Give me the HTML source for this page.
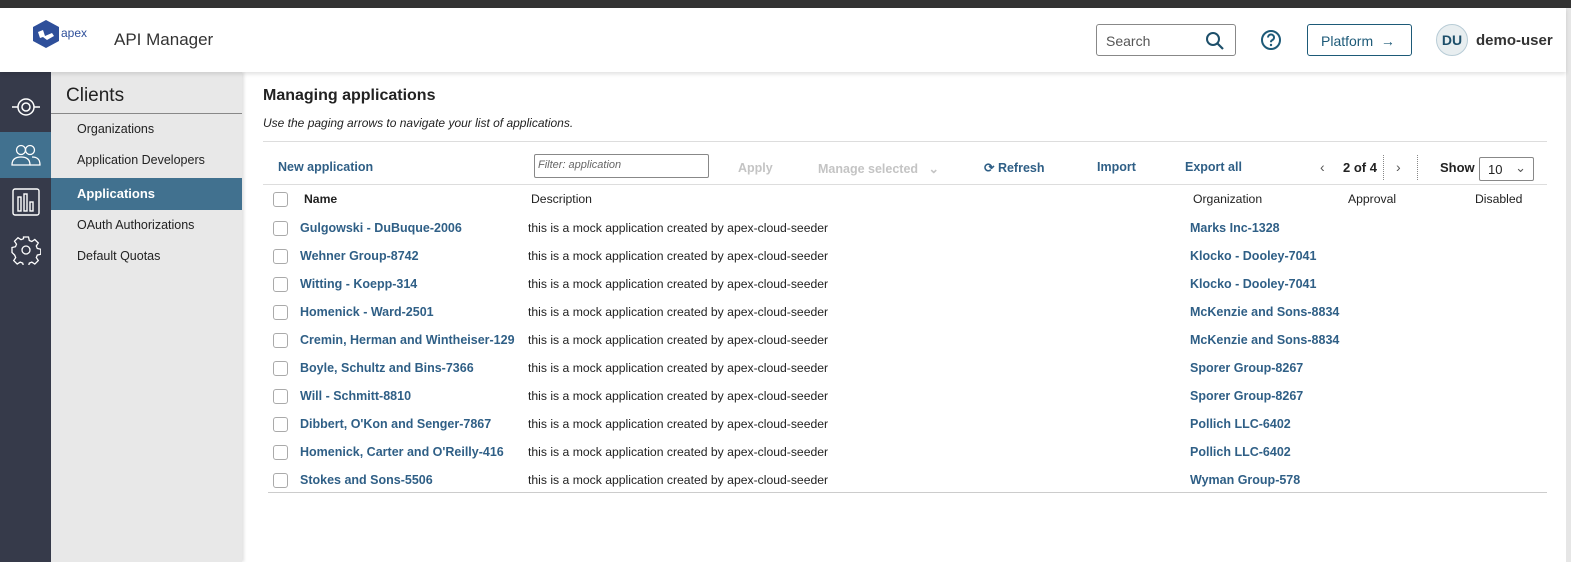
<!DOCTYPE html>
<html><head><style>
*{box-sizing:border-box;margin:0;padding:0}
body{width:1571px;height:562px;overflow:hidden;background:#fff;font-family:"Liberation Sans",sans-serif;position:relative;color:#222}
.abs{position:absolute}
.top{left:0;top:0;width:1571px;height:8px;background:#333}
.hdr{left:0;top:8px;width:1566px;height:64px;background:#fff;box-shadow:0 2px 4px rgba(0,0,0,.12);z-index:2}
.rail{left:0;top:72px;width:51px;height:490px;background:#363a4a}
.side{left:51px;top:72px;width:191px;height:490px;background:#e8e8e8;box-shadow:2px 0 3px rgba(0,0,0,.12)}
.side .it{position:absolute;left:26px;font-size:12.5px;color:#222}
a,.lk{color:#2f5f86;font-weight:bold;font-size:12.5px}
.row{position:absolute;left:268px;width:1279px;height:28px;font-size:12.2px}
.cb{position:absolute;left:5px;width:15px;height:15px;border:1px solid #aaa;border-radius:3px;background:#fff}
.row span{position:absolute;top:1px}
.scroll{left:1566px;top:8px;width:5px;height:554px;background:#e6e6e6}
</style></head><body>
<div class="abs top"></div>
<div class="abs scroll"></div>
<div class="abs hdr">
 <svg class="abs" style="left:32px;top:11px" width="28" height="30" viewBox="0 0 28 30"><polygon points="14,1 27,8 27,22 14,29 1,22 1,8" fill="#2e4f9a"/><path d="M6 13 L11 11 L13 17 L20 14 L22 17 L15 21 L11 18 L8 19Z" fill="#fff"/></svg>
 <div class="abs" style="left:61px;top:18px;font-size:12px;color:#2e4f9a">apex</div>
 <div class="abs" style="left:114px;top:22px;font-size:17px;color:#333">API Manager</div>
 <div class="abs" style="left:1096px;top:16px;width:140px;height:32px;border:1px solid #888;border-radius:3px"><span class="abs" style="left:9px;top:8px;font-size:14px;color:#555">Search</span>
  <svg class="abs" style="left:108px;top:6px" width="20" height="20" viewBox="0 0 20 20"><circle cx="8" cy="8" r="6" fill="none" stroke="#1d4f6a" stroke-width="2"/><path d="M12.5 12.5L18 18" stroke="#1d4f6a" stroke-width="2.2"/></svg></div>
 <svg class="abs" style="left:1260px;top:21px" width="22" height="22" viewBox="0 0 22 22"><circle cx="11" cy="11" r="9" fill="none" stroke="#1d5a78" stroke-width="2"/><path d="M8 8.5a3 3 0 1 1 4 2.8c-1 .4-1 1-1 2" fill="none" stroke="#1d5a78" stroke-width="2"/><circle cx="11" cy="16" r="1.2" fill="#1d5a78"/></svg>
 <div class="abs" style="left:1307px;top:16px;width:105px;height:32px;border:1px solid #1d5a78;border-radius:3px;font-size:14px;color:#1d5a78;padding:8px 0 0 13px">Platform &nbsp;→</div>
 <div class="abs" style="left:1436px;top:16px;width:32px;height:32px;border-radius:50%;background:#e8eef0;border:1px solid #b8ccd6;font-size:14px;font-weight:bold;color:#1d4f6a;text-align:center;line-height:30px">DU</div>
 <div class="abs" style="left:1476px;top:24px;font-size:15px;font-weight:bold;color:#333">demo-user</div>
</div>
<div class="abs rail">
 <svg class="abs" style="left:12px;top:22px" width="28" height="26" viewBox="0 0 28 26"><circle cx="14" cy="13" r="8" fill="none" stroke="#fff" stroke-width="1.5"/><circle cx="14" cy="13" r="4" fill="none" stroke="#fff" stroke-width="1.5"/><path d="M0 13h6M22 13h6" stroke="#fff" stroke-width="1.5"/></svg>
 <div class="abs" style="left:0;top:60px;width:51px;height:46px;background:#41718f"></div>
 <svg class="abs" style="left:11px;top:71px" width="30" height="24" viewBox="0 0 30 24"><g fill="none" stroke="#fff" stroke-width="1.3"><circle cx="10" cy="7" r="4.5"/><path d="M1 22c0-6 4-8 9-8s9 2 9 8z"/><circle cx="19" cy="7" r="4.5"/><path d="M21 14c5 0 8 2 8 8h-10"/></g></svg>
 <svg class="abs" style="left:12px;top:116px" width="28" height="28" viewBox="0 0 28 28"><g fill="none" stroke="#fff" stroke-width="1.4"><rect x="1" y="1" width="26" height="26" rx="2"/><rect x="6" y="9" width="3" height="14"/><rect x="12" y="6" width="3" height="17"/><rect x="18" y="14" width="3" height="9"/></g></svg>
 <svg class="abs" style="left:11px;top:163px" width="30" height="30" viewBox="0 0 30 30"><g fill="none" stroke="#fff" stroke-width="1.3"><path d="M12.5 2h5l.8 3.5 2.5 1 3-2 3.5 3.5-2 3 1 2.5 3.5.8v5l-3.5.8-1 2.5 2 3-3.5 3.5-3-2-2.5 1-.8 3.5h-5l-.8-3.5-2.5-1-3 2-3.5-3.5 2-3-1-2.5L1 17.5v-5l3.5-.8 1-2.5-2-3L7 2.7l3 2 2.5-1z"/><circle cx="15" cy="15" r="4"/></g></svg>
</div>
<div class="abs side">
 <div class="abs" style="left:15px;top:13px;font-size:19px;color:#222">Clients</div>
 <div class="abs" style="left:0;top:41px;width:191px;height:1px;background:#888"></div>
 <div class="it" style="top:50px">Organizations</div>
 <div class="it" style="top:81px">Application Developers</div>
 <div class="abs" style="left:0;top:106px;width:191px;height:32px;background:#41718f"></div>
 <div class="it" style="top:114px;color:#fff;font-weight:bold;font-size:13px">Applications</div>
 <div class="it" style="top:146px">OAuth Authorizations</div>
 <div class="it" style="top:177px">Default Quotas</div>
</div>
<div class="abs" style="left:263px;top:87px;font-size:16px;font-weight:bold;color:#222">Managing applications</div>
<div class="abs" style="left:263px;top:116px;font-size:12px;font-style:italic;color:#222">Use the paging arrows to navigate your list of applications.</div>
<div class="abs" style="left:263px;top:141px;width:1284px;height:1px;background:#ddd"></div>
<div class="abs lk" style="left:278px;top:160px">New application</div>
<div class="abs" style="left:534px;top:154px;width:175px;height:24px;border:1px solid #888;border-radius:2px;font-size:11px;font-style:italic;color:#666;padding:4px 3px">Filter: application</div>
<div class="abs lk" style="left:738px;top:161px;color:#c4c4c4">Apply</div>
<div class="abs lk" style="left:818px;top:161px;color:#c4c4c4">Manage selected &nbsp;&nbsp;⌄</div>
<div class="abs lk" style="left:984px;top:160px">⟳ Refresh</div>
<div class="abs lk" style="left:1097px;top:160px">Import</div>
<div class="abs lk" style="left:1185px;top:160px">Export all</div>
<div class="abs" style="left:1320px;top:159px;font-size:14px;color:#555">‹</div>
<div class="abs" style="left:1343px;top:160px;font-size:13px;font-weight:bold">2 of 4</div>
<div class="abs" style="left:1383px;top:155px;height:25px;border-left:1px dotted #888"></div>
<div class="abs" style="left:1396px;top:159px;font-size:14px;color:#555">›</div>
<div class="abs" style="left:1417px;top:155px;height:25px;border-left:1px dotted #888"></div>
<div class="abs" style="left:1440px;top:160px;font-size:13px;font-weight:bold">Show</div>
<div class="abs" style="left:1479px;top:157px;width:55px;height:24px;border:1px solid #888;border-radius:2px;font-size:13px;padding:4px 8px">10 <span style="position:absolute;right:7px;top:2px;color:#555">⌄</span></div>
<div class="abs" style="left:263px;top:184px;width:1284px;height:1px;background:#ddd"></div>
<div class="row" style="top:192px"><div class="cb" style="top:0"></div><span style="left:36px;font-weight:bold;top:0">Name</span><span style="left:263px;top:0">Description</span><span style="left:925px;top:0">Organization</span><span style="left:1080px;top:0">Approval</span><span style="left:1207px;top:0">Disabled</span></div>
<div id="rows"></div>
<div class="abs" style="left:268px;top:492px;width:1279px;height:1px;background:#ccc"></div>
<script>
var d=[["Gulgowski - DuBuque-2006","Marks Inc-1328"],["Wehner Group-8742","Klocko - Dooley-7041"],["Witting - Koepp-314","Klocko - Dooley-7041"],["Homenick - Ward-2501","McKenzie and Sons-8834"],["Cremin, Herman and Wintheiser-129","McKenzie and Sons-8834"],["Boyle, Schultz and Bins-7366","Sporer Group-8267"],["Will - Schmitt-8810","Sporer Group-8267"],["Dibbert, O'Kon and Senger-7867","Pollich LLC-6402"],["Homenick, Carter and O'Reilly-416","Pollich LLC-6402"],["Stokes and Sons-5506","Wyman Group-578"]];
var h="";d.forEach(function(r,i){h+='<div class="row" style="top:'+(220+i*28)+'px"><div class="cb" style="top:1px"></div><span class="lk" style="left:32px">'+r[0]+'</span><span style="left:260px">this is a mock application created by apex-cloud-seeder</span><span class="lk" style="left:922px">'+r[1]+'</span></div>'});
document.getElementById("rows").innerHTML=h;
</script>
</body></html>
